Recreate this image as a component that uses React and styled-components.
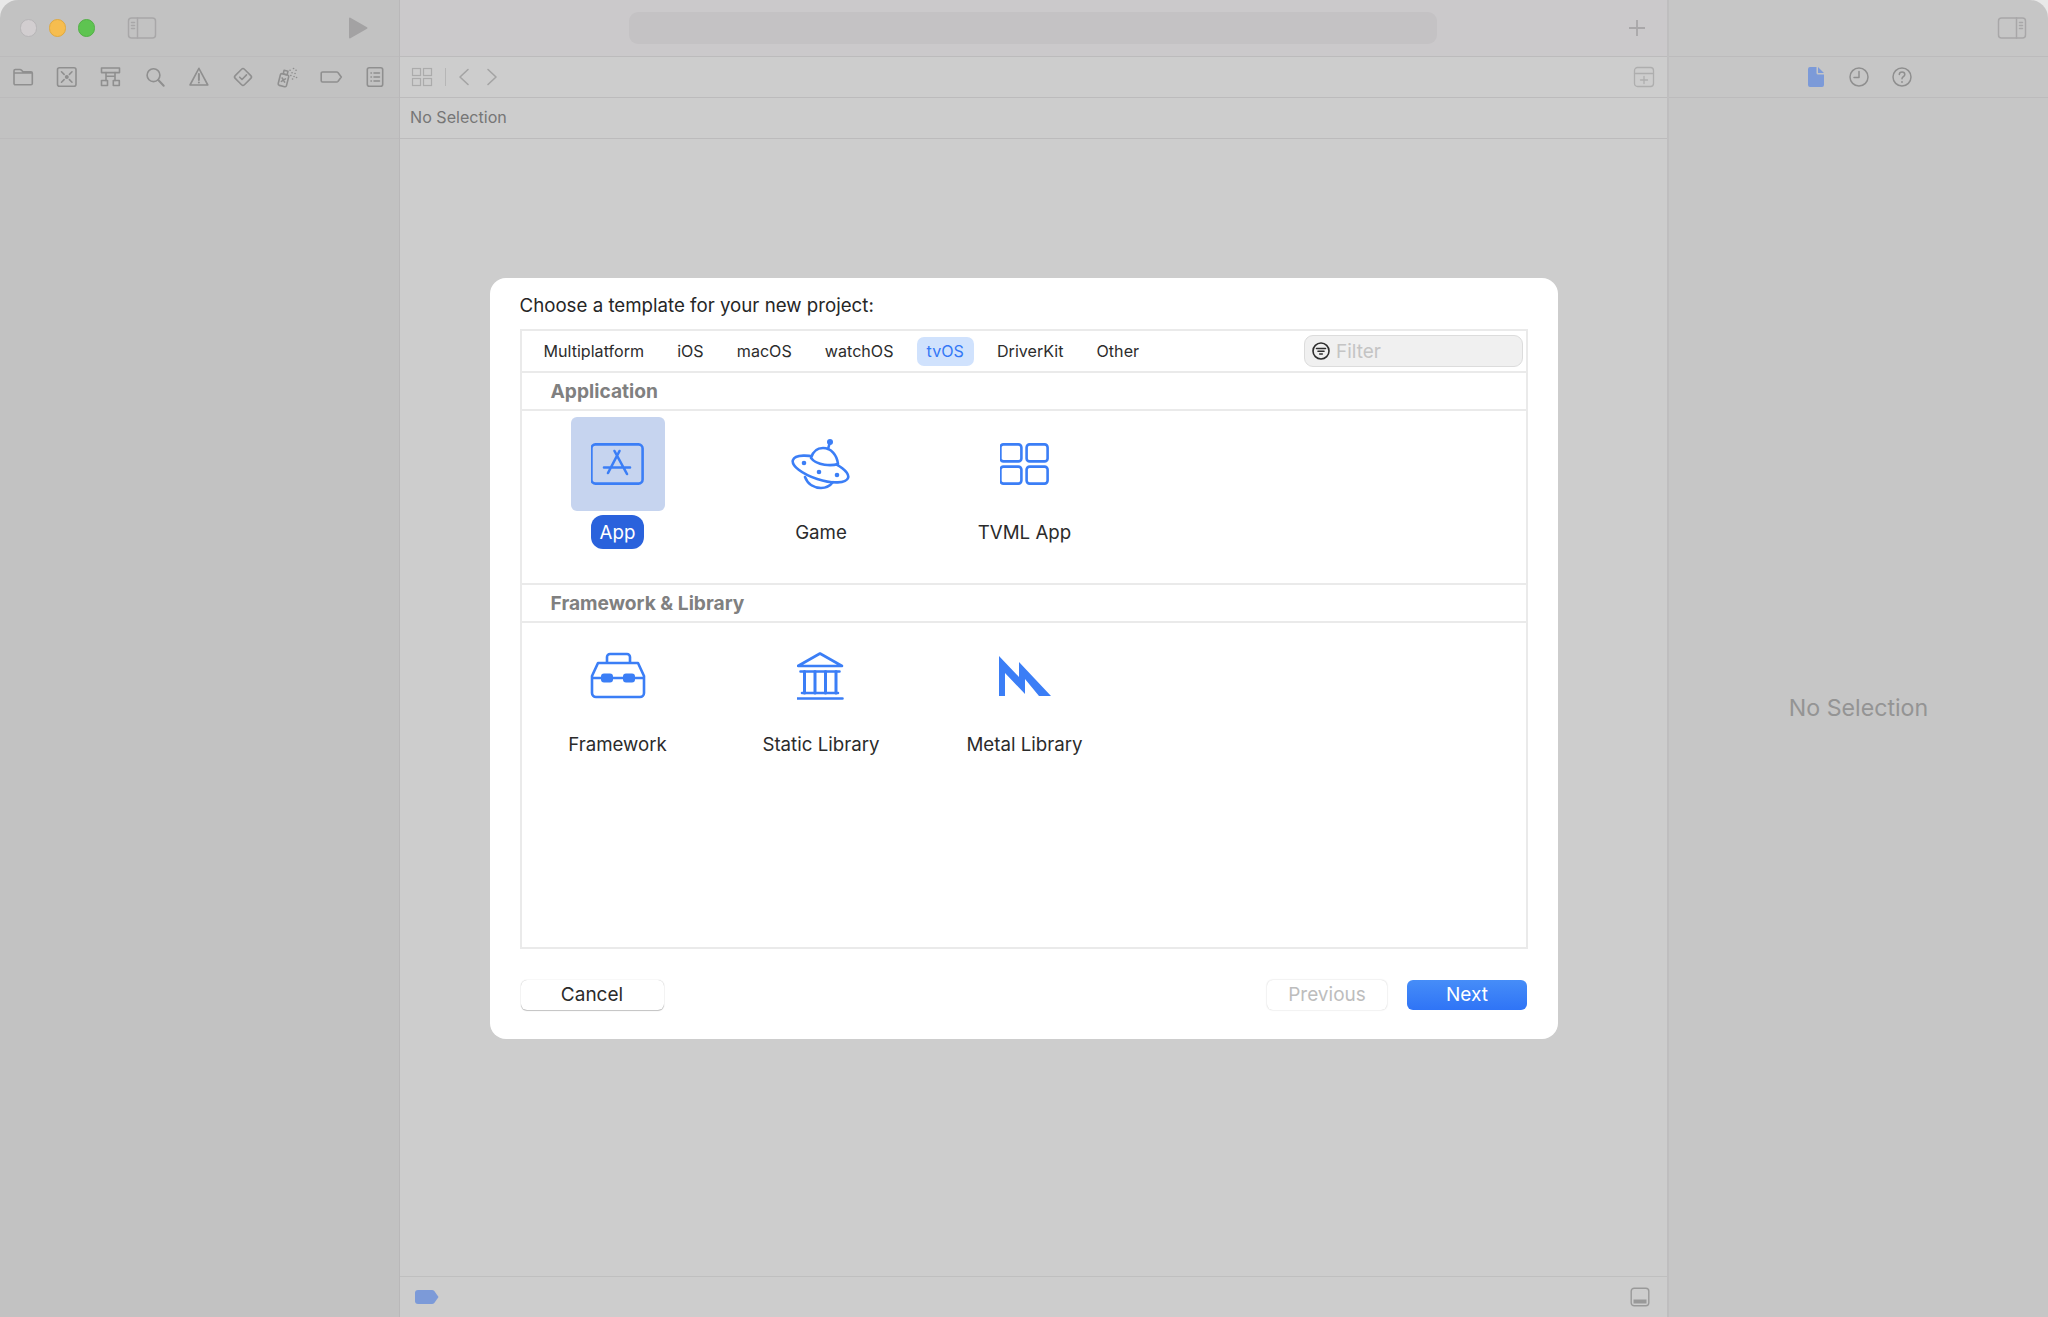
import React from 'react';
import styled, { createGlobalStyle } from 'styled-components';

const GlobalStyle = createGlobalStyle`
  html, body { margin: 0; padding: 0; background: #e8e8e8; }
  * { box-sizing: border-box; }
  body { font-family: Inter, "Liberation Sans", sans-serif; }
`;

const Window = styled.div`
  position: relative;
  display: flex;
  width: 2048px;
  height: 1317px;
  border-radius: 18px 18px 0 0;
  overflow: hidden;
`;

const Sidebar = styled.div`
  display: flex;
  flex-direction: column;
  width: 400px;
  flex-shrink: 0;
  background: #c2c2c2;
  border-right: 1px solid #b9b8b9;
`;

const Center = styled.div`
  display: flex;
  flex-direction: column;
  flex: 1;
  background: #cdcdcd;
`;

const Inspector = styled.div`
  display: flex;
  flex-direction: column;
  width: 381px;
  flex-shrink: 0;
  background: #c6c6c6;
  border-left: 2px solid #bfbebf;
`;

const TitleBar = styled.div`
  display: flex;
  align-items: center;
  justify-content: ${({ $justify }) => $justify || 'flex-start'};
  height: 57px;
  flex-shrink: 0;
  padding: ${({ $padding }) => $padding || '0'};
  background: ${({ $bg }) => $bg || 'transparent'};
  border-bottom: 1px solid #bcbbbc;
`;

const Lights = styled.div`
  display: flex;
  gap: 11.5px;
  margin-left: 19.5px;
`;

const Light = styled.span`
  width: 17.5px;
  height: 17.5px;
  border-radius: 50%;
  background: ${({ $color }) => $color};
  border: 1px solid ${({ $edge }) => $edge};
`;

const NavBar = styled.div`
  display: flex;
  align-items: center;
  height: 41px;
  flex-shrink: 0;
  padding: ${({ $padding }) => $padding || '0'};
  justify-content: ${({ $justify }) => $justify || 'flex-start'};
  border-bottom: 1px solid #bcbbbc;
`;

const IconCell = styled.span`
  display: flex;
  align-items: center;
  justify-content: center;
  width: ${({ $width }) => $width || 44}px;
  height: 28px;
  margin-left: ${({ $left }) => $left || 0}px;
  margin-right: ${({ $right }) => $right || 0}px;
  color: ${({ $color }) => $color || '#8f8f8f'};
`;

const PathBar = styled.div`
  display: flex;
  align-items: center;
  height: 41px;
  flex-shrink: 0;
  padding: 0 0 2px ${({ $indent }) => $indent || 0}px;
  border-bottom: 1px solid #bcbbbc;
  font-size: 16.1px;
  color: #767676;
`;

const Fill = styled.div`
  display: flex;
  flex: 1;
  align-items: center;
  justify-content: center;
`;

const EmptyLabel = styled.div`
  font-size: 23.2px;
  color: #949494;
`;

const SearchBar = styled.div`
  width: 808px;
  height: 32px;
  margin-left: 229px;
  border-radius: 9px;
  background: #c4c2c4;
`;

const DividerLine = styled.span`
  width: 1px;
  height: 18px;
  margin: 0 4px 0 11px;
  background: #b6b6b6;
`;

const BottomBar = styled.div`
  display: flex;
  align-items: center;
  justify-content: space-between;
  height: 41px;
  flex-shrink: 0;
  padding: 0 17px 0 15px;
  border-top: 1px solid #bfbfbf;
`;

const Overlay = styled.div`
  position: absolute;
  inset: 0;
  display: flex;
  justify-content: center;
  align-items: flex-start;
  padding-top: 278px;
`;

const Dialog = styled.div`
  display: flex;
  flex-direction: column;
  width: 1068px;
  height: 761px;
  padding: 15px 30px 0 29.5px;
  border-radius: 16px;
  background: #fff;
`;

const DialogTitle = styled.div`
  height: 26px;
  margin-bottom: 10px;
  font-size: 18.7px;
  line-height: 26px;
  color: #262626;
`;

const Panel = styled.div`
  display: flex;
  flex-direction: column;
  height: 620px;
  border: 2px solid #eaeaea;
`;

const TabBar = styled.div`
  display: flex;
  align-items: center;
  gap: 13.1px;
  height: 42px;
  flex-shrink: 0;
  padding: 0 3px 0 12px;
  border-bottom: 2px solid #eaeaea;
`;

const Tab = styled.div`
  display: flex;
  align-items: center;
  height: 29px;
  padding: 0 10px;
  border-radius: 7px;
  font-size: 16.1px;
  color: ${({ $active }) => ($active ? '#3478f6' : '#2c2c2c')};
  background: ${({ $active }) => ($active ? '#d0e2fd' : 'transparent')};
`;

const FilterBox = styled.div`
  display: flex;
  align-items: center;
  gap: 6px;
  width: 219px;
  height: 32px;
  margin-left: auto;
  padding-left: 7px;
  border: 1px solid #dcdcdc;
  border-radius: 9px;
  background: #f0f0f0;
  font-size: 19px;
  color: #c4c4c4;
`;

const SectionTitle = styled.div`
  display: flex;
  align-items: center;
  height: ${({ $height }) => $height}px;
  flex-shrink: 0;
  padding-left: 29px;
  border-bottom: 2px solid #eaeaea;
  font-size: 19.2px;
  font-weight: 700;
  color: #808080;
`;

const TemplateRow = styled.div`
  display: flex;
  gap: 11.5px;
  height: ${({ $height }) => $height}px;
  flex-shrink: 0;
  padding-top: 6px;
  border-bottom: ${({ $last }) => ($last ? 'none' : '2px solid #eaeaea')};
`;

const Template = styled.div`
  display: flex;
  flex-direction: column;
  align-items: center;
  width: 192px;
`;

const Tile = styled.div`
  display: flex;
  align-items: center;
  justify-content: center;
  width: 94px;
  height: 94px;
  border-radius: 6px;
  background: ${({ $selected }) => ($selected ? '#c6d4ef' : 'transparent')};
`;

const TemplateName = styled.div`
  display: flex;
  align-items: center;
  height: 34px;
  margin-top: 4px;
  padding: 0 8.5px;
  border-radius: 12px;
  font-size: 18.7px;
  color: ${({ $selected }) => ($selected ? '#fff' : '#2b2b2b')};
  background: ${({ $selected }) => ($selected ? '#2a62dc' : 'transparent')};
`;

const Footer = styled.div`
  display: flex;
  align-items: center;
  gap: 20px;
  margin-top: 31px;
  padding: 0 1px;
`;

const Spacer = styled.div`
  flex: 1;
`;

const Button = styled.div`
  display: flex;
  align-items: center;
  justify-content: center;
  width: ${({ $width }) => $width}px;
  height: 30px;
  padding-bottom: 1px;
  border-radius: 6px;
  font-size: 19px;
  color: #2b2b2b;
  background: #fff;
  box-shadow: 0 0 1px rgba(0, 0, 0, 0.3), 0 1px 1px rgba(0, 0, 0, 0.22);
`;

const DisabledButton = styled(Button)`
  color: #bdbdbd;
  box-shadow: 0 0 1.5px rgba(0, 0, 0, 0.25);
`;

const PrimaryButton = styled(Button)`
  color: #fff;
  background: linear-gradient(#468df8, #2f74f6);
  box-shadow: none;
`;

const Stroke = ({ w = 24, h = 24, sw = 1.6, children }) => (
  <svg
    width={w}
    height={h}
    viewBox={`0 0 ${w} ${h}`}
    fill="none"
    stroke="currentColor"
    strokeWidth={sw}
    strokeLinecap="round"
    strokeLinejoin="round"
  >
    {children}
  </svg>
);

const navIcons = [
  <Stroke key="folder">
    <path d="M3 8V5.8C3 5 3.6 4.5 4.3 4.5H9c.6 0 1 .2 1.4.6L12 6.8h8c.8 0 1.3.5 1.3 1.2v10.4c0 .8-.5 1.3-1.3 1.3H4.3c-.7 0-1.3-.5-1.3-1.3V8h18.3" />
  </Stroke>,
  <Stroke key="issues">
    <rect x="2.5" y="2.7" width="18.5" height="18.5" rx="2" />
    <circle cx="11.8" cy="12" r="2" fill="currentColor" stroke="none" />
    <path d="M6.5 6.8l2.6 2.6M17 6.8l-2.6 2.6M6.5 17.2l2.6-2.6M17 17.2l-2.6-2.6" />
  </Stroke>,
  <Stroke key="hierarchy">
    <rect x="2.5" y="3" width="18" height="4.6" />
    <path d="M7 7.6v8M16 7.6v8M7 11.3h9" />
    <rect x="2.5" y="15.5" width="6" height="5" />
    <rect x="14.3" y="15.5" width="6" height="5" />
  </Stroke>,
  <Stroke key="search">
    <circle cx="10.5" cy="10.2" r="6.4" />
    <path d="M15.3 15l5.4 5.7" strokeWidth="2" />
  </Stroke>,
  <Stroke key="warning">
    <path d="M11.9 3.3L20.8 20H3L11.9 3.3Z" />
    <path d="M11.9 9v6" strokeWidth="2" />
    <circle cx="11.9" cy="17.4" r="1" fill="currentColor" stroke="none" />
  </Stroke>,
  <Stroke key="test">
    <rect x="5.5" y="5.5" width="13" height="13" rx="2" transform="rotate(45 12 12)" />
    <path d="M8.7 12.2l2.3 2.3 4.5-4.6" />
  </Stroke>,
  <Stroke key="debug">
    <g transform="rotate(14 9 14)">
      <rect x="4.5" y="9.3" width="8.5" height="12" rx="1.5" />
      <rect x="7" y="5.5" width="4" height="3.8" />
      <path d="M7 13.5l3.4 3.4M10.4 13.5L7 16.9" />
    </g>
    <path d="M15 5.2h.1M18.5 3.5h.1M21 5.2h.1M17 7.8h.1M20 8.5h.1M15.8 10.5h.1M19 11.5h.1M21.5 12.5h.1M17.5 14h.1" />
  </Stroke>,
  <Stroke key="tag">
    <path d="M2.2 8.4c0-.8.6-1.4 1.4-1.4h14.2c.5 0 .8.2 1.1.5l3.4 4.5-3.4 4.5c-.3.3-.6.5-1.1.5H3.6c-.8 0-1.4-.6-1.4-1.4V8.4Z" />
  </Stroke>,
  <Stroke key="report">
    <rect x="4.3" y="2.7" width="15.4" height="18.6" rx="2" />
    <path d="M8 8h.4M11 8h5.5M8 12h.4M11 12h5.5M8 16h.4M11 16h5.5" />
  </Stroke>,
];

const SidebarToggle = ({ flip }) => (
  <Stroke w={30} h={24} sw={1.5}>
    <g transform={flip ? 'matrix(-1 0 0 1 30 0)' : undefined}>
      <rect x="1.5" y="2" width="27" height="20" rx="3" />
      <path d="M10.5 2v20M4.5 6.5h3M4.5 9.5h3M4.5 12.5h3" />
    </g>
  </Stroke>
);

const AppIcon = () => (
  <svg width="54" height="42" viewBox="1 0 54 42" fill="none" stroke="#3b7ef6" strokeWidth="2.6" strokeLinecap="round">
    <rect x="1.4" y="1.4" width="51.2" height="39.2" rx="4" />
    <path d="M29.5 8L18 30M24.5 8L37 31M14 24.5h26" />
  </svg>
);

const GameIcon = () => (
  <svg width="60" height="56" viewBox="1 0 60 56" fill="none" stroke="#3b7ef6" strokeWidth="2.6" strokeLinecap="round" strokeLinejoin="round">
    <ellipse cx="30.5" cy="33" rx="29" ry="10.5" transform="rotate(18 30.5 33)" />
    <path d="M21 22C23 15 28 12 33 12C41 12 47 19 48 28C42 30 27 30 21 22Z" fill="#fff" />
    <path d="M40 6L38 13" />
    <circle cx="40" cy="6" r="3" fill="#3b7ef6" stroke="none" />
    <path d="M15 41C18 49 25 52 31 52C36 52 40 50 43 46" />
    <circle cx="14" cy="27" r="2.3" fill="#3b7ef6" stroke="none" />
    <circle cx="29" cy="36" r="2.3" fill="#3b7ef6" stroke="none" />
    <circle cx="47" cy="39" r="2.3" fill="#3b7ef6" stroke="none" />
  </svg>
);

const TvmlIcon = () => (
  <svg width="50" height="42" viewBox="1 0 50 42" fill="none" stroke="#3b7ef6" strokeWidth="2.6">
    <rect x="1.4" y="1.4" width="21" height="17" rx="3" />
    <rect x="27.6" y="1.4" width="21" height="17" rx="3" />
    <rect x="1.4" y="23.6" width="21" height="17" rx="3" />
    <rect x="27.6" y="23.6" width="21" height="17" rx="3" />
  </svg>
);

const ToolboxIcon = () => (
  <svg width="56" height="48" viewBox="0 0 56 48" fill="none" stroke="#3b7ef6" strokeWidth="2.6" strokeLinejoin="round">
    <path d="M8 11H48L54 24V41A4 4 0 0 1 50 45H6A4 4 0 0 1 2 41V24Z" />
    <path d="M17 11V5A3 3 0 0 1 20 2H37A3 3 0 0 1 40 5V11" />
    <path d="M2 26H54" />
    <rect x="11" y="21.5" width="12" height="9" rx="3" fill="#3b7ef6" stroke="none" />
    <rect x="33" y="21.5" width="12" height="9" rx="3" fill="#3b7ef6" stroke="none" />
  </svg>
);

const BankIcon = () => (
  <svg width="48" height="48" viewBox="1 0 48 48" fill="none" stroke="#3b7ef6" strokeWidth="2.6" strokeLinecap="round" strokeLinejoin="round">
    <path d="M24 1.5L2 14H46Z" />
    <path d="M4.5 19.5H43.5M6 41H42M1.5 46.5H46.5" />
    <path d="M8.5 19.5V41M19 19.5V41M29.5 19.5V41M40 19.5V41" strokeWidth="3" />
  </svg>
);

const MetalIcon = () => (
  <svg width="52" height="42" viewBox="0 0 52 42" fill="#3b7ef6">
    <polygon points="0,1 20,22 20,7 52,41 40,41 26,24 26,39 6,18 6,41 0,41" />
  </svg>
);

const rows = [
  {
    title: 'Application',
    height: 38,
    rowHeight: 174,
    items: [
      ['App', <AppIcon key="a" />, true],
      ['Game', <GameIcon key="g" />],
      ['TVML App', <TvmlIcon key="t" />],
    ],
  },
  {
    title: 'Framework & Library',
    height: 38,
    rowHeight: 324,
    last: true,
    items: [
      ['Framework', <ToolboxIcon key="f" />],
      ['Static Library', <BankIcon key="s" />],
      ['Metal Library', <MetalIcon key="m" />],
    ],
  },
];

const tabs = ['Multiplatform', 'iOS', 'macOS', 'watchOS', 'tvOS', 'DriverKit', 'Other'];

export default function App() {
  return (
    <>
      <GlobalStyle />
      <Window>
        <Sidebar>
          <TitleBar>
            <Lights>
              <Light $color="#d2ced0" $edge="#b7b5b7" />
              <Light $color="#f6bd4f" $edge="#e0a93f" />
              <Light $color="#5ec451" $edge="#53b046" />
            </Lights>
            <IconCell $width={30} $left={32} $color="#a8a7a8">
              <SidebarToggle />
            </IconCell>
            <IconCell $width={24} $left={189} $color="#a3a2a3">
              <svg width="20" height="22" viewBox="0 0 20 22" fill="currentColor">
                <path d="M1 1.5C1 .7 1.8.4 2.4.8L19 10.2c.6.4.6 1.2 0 1.6L2.4 21.2c-.6.4-1.4.1-1.4-.7Z" />
              </svg>
            </IconCell>
          </TitleBar>
          <NavBar $padding="0 0 0 1px">
            {navIcons.map((icon, i) => (
              <IconCell key={i}>{icon}</IconCell>
            ))}
          </NavBar>
          <PathBar />
          <Fill />
        </Sidebar>
        <Center>
          <TitleBar $bg="#cbc9cb">
            <SearchBar />
            <IconCell $width={24} $left={188} $color="#a9a7a9">
              <svg width="18" height="18" viewBox="0 0 18 18" fill="none" stroke="currentColor" strokeWidth="1.8">
                <path d="M9 1v16M1 9h16" />
              </svg>
            </IconCell>
          </TitleBar>
          <NavBar>
            <IconCell $width={24} $left={10} $color="#ababab">
              <svg width="22" height="20" viewBox="0 0 22 20" fill="none" stroke="currentColor" strokeWidth="1.2">
                <rect x="1.5" y="1.5" width="8" height="7" />
                <rect x="12.5" y="1.5" width="8" height="7" />
                <rect x="1.5" y="11.5" width="8" height="7" />
                <rect x="12.5" y="11.5" width="8" height="7" />
              </svg>
            </IconCell>
            <DividerLine />
            <IconCell $width={28} $color="#a4a4a4">
              <svg width="12" height="18" viewBox="0 0 12 18" fill="none" stroke="currentColor" strokeWidth="1.6" strokeLinecap="round" strokeLinejoin="round">
                <path d="M10 1.5L2 9l8 7.5" />
              </svg>
            </IconCell>
            <IconCell $width={28} $color="#a4a4a4">
              <svg width="12" height="18" viewBox="0 0 12 18" fill="none" stroke="currentColor" strokeWidth="1.6" strokeLinecap="round" strokeLinejoin="round">
                <path d="M2 1.5L10 9l-8 7.5" />
              </svg>
            </IconCell>
            <Spacer />
            <IconCell $width={24} $right={11} $color="#aeaeae">
              <Stroke sw={1.3}>
                <rect x="2.5" y="2.5" width="19" height="19" rx="3" />
                <path d="M2.5 8.5h19M12 11.5v7M8.5 15h7" />
              </Stroke>
            </IconCell>
          </NavBar>
          <PathBar $indent={10}>No Selection</PathBar>
          <Fill />
          <BottomBar>
            <svg width="24" height="14" viewBox="0 0 24 14" fill="#7c9ad8">
              <path d="M0 3a3 3 0 0 1 3-3h14c1 0 1.7.4 2.3 1L23.5 7 19.3 13c-.6.6-1.3 1-2.3 1H3a3 3 0 0 1-3-3Z" />
            </svg>
            <svg width="20" height="20" viewBox="0 0 20 20" fill="none" stroke="#999" strokeWidth="1.4">
              <rect x="1.2" y="1.2" width="17.6" height="17.6" rx="3" />
              <rect x="3.5" y="12.5" width="13" height="4" fill="#999" stroke="none" />
            </svg>
          </BottomBar>
        </Center>
        <Inspector>
          <TitleBar $padding="0 21px 0 0" $justify="flex-end">
            <IconCell $width={30} $color="#a8a7a8">
              <SidebarToggle flip />
            </IconCell>
          </TitleBar>
          <NavBar $justify="center">
            <IconCell $width={43} $color="#7c9ad8">
              <svg width="16" height="20" viewBox="0 0 16 20" fill="currentColor">
                <path d="M2 0H8.5V6A1.5 1.5 0 0 0 10 7.5H16V18A2 2 0 0 1 14 20H2A2 2 0 0 1 0 18V2A2 2 0 0 1 2 0ZM10 0L16 6H10Z" />
              </svg>
            </IconCell>
            <IconCell $width={43}>
              <Stroke sw={1.5}>
                <circle cx="12" cy="12" r="9" />
                <path d="M12 6.5v6H7" />
              </Stroke>
            </IconCell>
            <IconCell $width={43}>
              <Stroke sw={1.5}>
                <circle cx="12" cy="12" r="9" />
                <path d="M9.3 9.6c0-1.6 1.2-2.6 2.8-2.6s2.7 1 2.7 2.4c0 2.2-2.8 2.2-2.8 4.4" />
                <circle cx="12" cy="17" r=".9" fill="currentColor" stroke="none" />
              </Stroke>
            </IconCell>
          </NavBar>
          <Fill>
            <EmptyLabel>No Selection</EmptyLabel>
          </Fill>
        </Inspector>
        <Overlay>
          <Dialog>
            <DialogTitle>Choose a template for your new project:</DialogTitle>
            <Panel>
              <TabBar>
                {tabs.map((name) => (
                  <Tab key={name} $active={name === 'tvOS'}>{name}</Tab>
                ))}
                <FilterBox>
                  <svg width="18" height="18" viewBox="0 0 18 18" fill="none" stroke="#2e2e2e" strokeWidth="1.6" strokeLinecap="round">
                    <circle cx="9" cy="9" r="8" />
                    <path d="M4.5 6.5h9M6 9.3h6M7.7 12h2.6" />
                  </svg>
                  Filter
                </FilterBox>
              </TabBar>
              {rows.map((row) => (
                <React.Fragment key={row.title}>
                  <SectionTitle $height={row.height}>{row.title}</SectionTitle>
                  <TemplateRow $last={row.last} $height={row.rowHeight}>
                    {row.items.map(([name, icon, selected]) => (
                      <Template key={name}>
                        <Tile $selected={selected}>{icon}</Tile>
                        <TemplateName $selected={selected}>{name}</TemplateName>
                      </Template>
                    ))}
                  </TemplateRow>
                </React.Fragment>
              ))}
            </Panel>
            <Footer>
              <Button $width={143}>Cancel</Button>
              <Spacer />
              <DisabledButton $width={120}>Previous</DisabledButton>
              <PrimaryButton $width={120}>Next</PrimaryButton>
            </Footer>
          </Dialog>
        </Overlay>
      </Window>
    </>
  );
}
